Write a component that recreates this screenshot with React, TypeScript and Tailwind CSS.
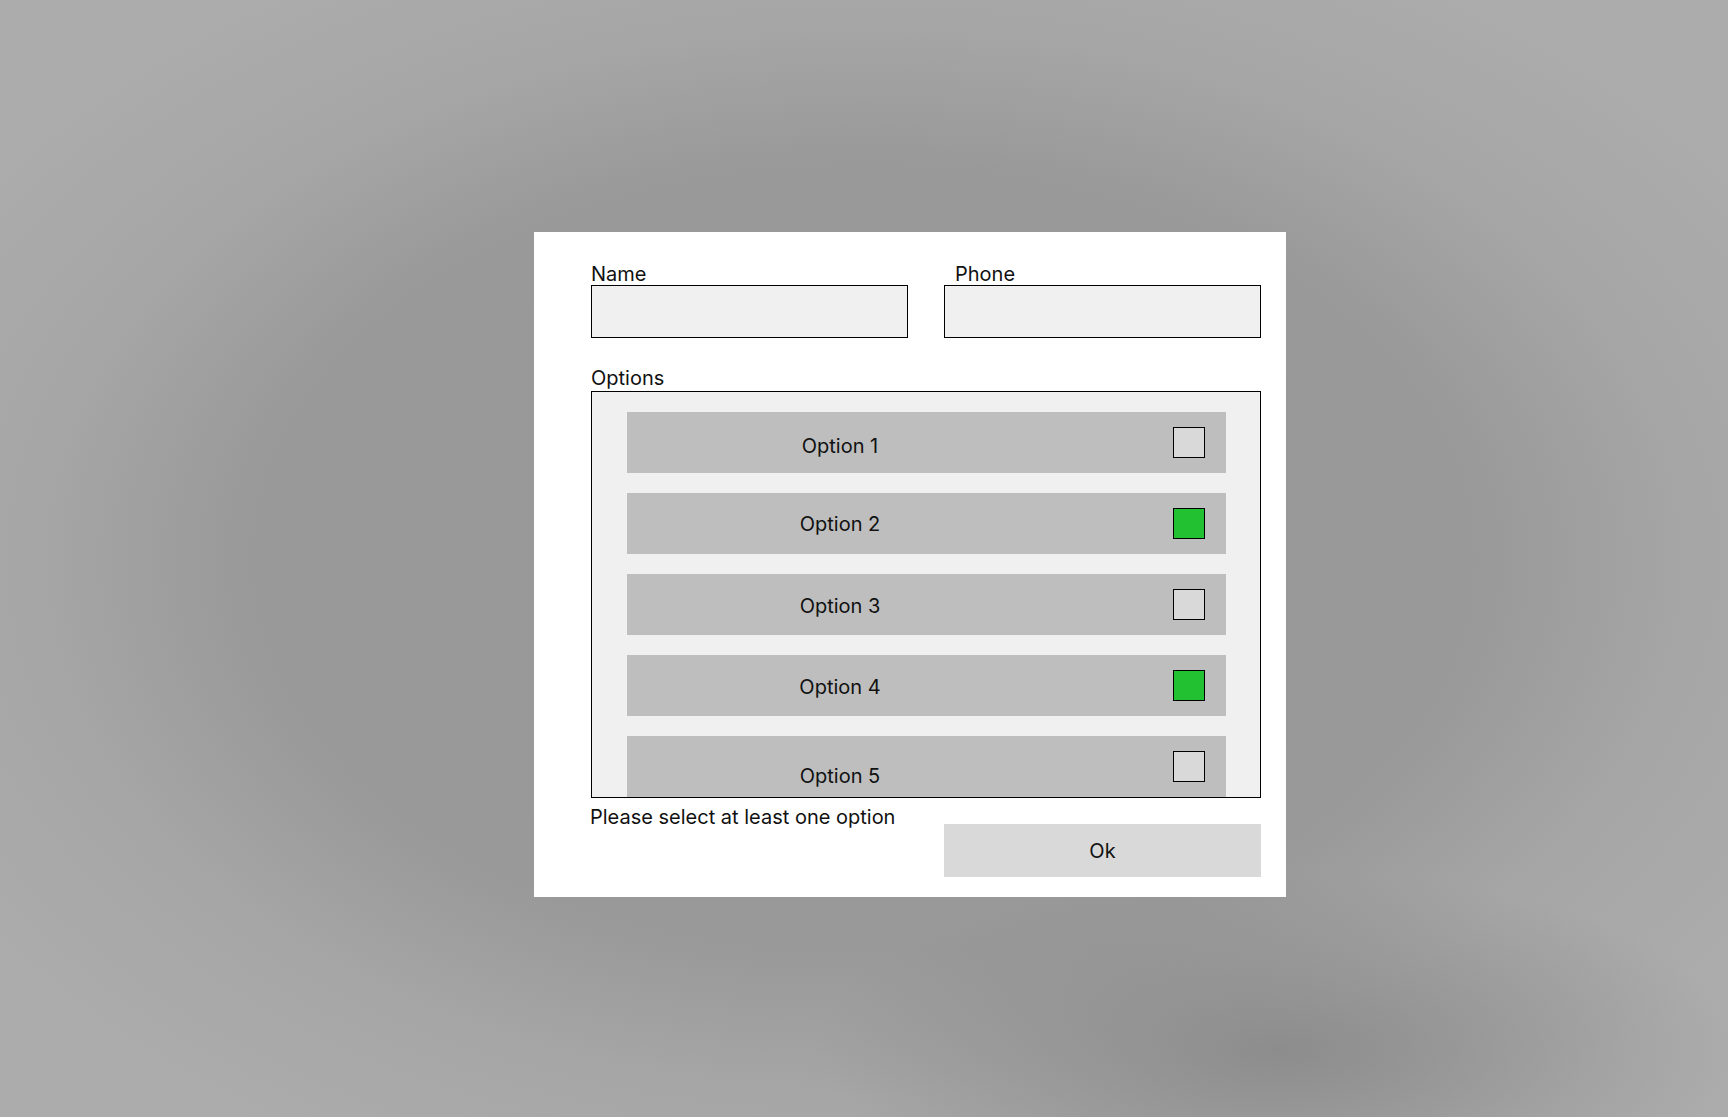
const options = [
  { label: "Option 1", checked: false, textPad: "pt-[22px]" },
  { label: "Option 2", checked: true, textPad: "pt-[19px]" },
  { label: "Option 3", checked: false, textPad: "pt-[20px]" },
  { label: "Option 4", checked: true, textPad: "pt-[20px]" },
  { label: "Option 5", checked: false, textPad: "pt-[28px]" },
];

function Field({ label, indent }: { label: string; indent?: boolean }) {
  return (
    <div className="w-[317px]">
      <div className={`h-[24px] leading-[26px] ${indent ? "pl-[11px]" : ""}`}>{label}</div>
      <input className="block h-[53px] w-full border border-black bg-[#f0f0f0] outline-none" />
    </div>
  );
}

function OptionRow({ label, checked, textPad }: { label: string; checked: boolean; textPad: string }) {
  return (
    <div className="flex h-[61px] w-[599px] shrink-0 bg-[#bebebe]">
      <div className={`w-[426px] text-center leading-[24px] ${textPad}`}>{label}</div>
      <div className="ml-auto mr-[21px] flex items-center">
        <span
          className={`block h-[31px] w-[32px] border border-black ${
            checked ? "bg-[#21c131]" : "bg-[#d9d9d9]"
          }`}
        />
      </div>
    </div>
  );
}

export default function App() {
  return (
    <div
      className="min-h-screen w-full pl-[534px] pt-[232px] text-[20px] text-[#111] bg-[radial-gradient(ellipse_460px_180px_at_1280px_1050px,rgba(136,136,136,0.85),rgba(136,136,136,0)),radial-gradient(ellipse_at_center,#989898_0%,#999999_50%,#a6a6a6_68%,#acacac_88%)]"
      style={{ fontFamily: "Inter, 'Noto Sans', sans-serif" }}
    >
      <div className="h-[665px] w-[752px] bg-white pl-[57px] pr-[25px] pt-[29px]">
        {/* Name / Phone */}
        <div className="flex gap-[36px]">
          <Field label="Name" />
          <Field label="Phone" indent />
        </div>

        {/* Options */}
        <div className="mt-[27px] h-[24px] leading-[26px]">Options</div>
        <div className="mt-[2px] flex h-[407px] w-[670px] flex-col gap-[20px] overflow-hidden border border-black bg-[#f0f0f0] pl-[35px] pt-[20px]">
          {options.map((o) => (
            <OptionRow key={o.label} {...o} />
          ))}
        </div>

        {/* Footer */}
        <div className="flex">
          <div className="-ml-px w-[354px] pt-[7px] leading-[24px]">Please select at least one option</div>
          <button className="mt-[26px] h-[53px] w-[317px] bg-[#d9d9d9] leading-[24px]">Ok</button>
        </div>
      </div>
    </div>
  );
}
